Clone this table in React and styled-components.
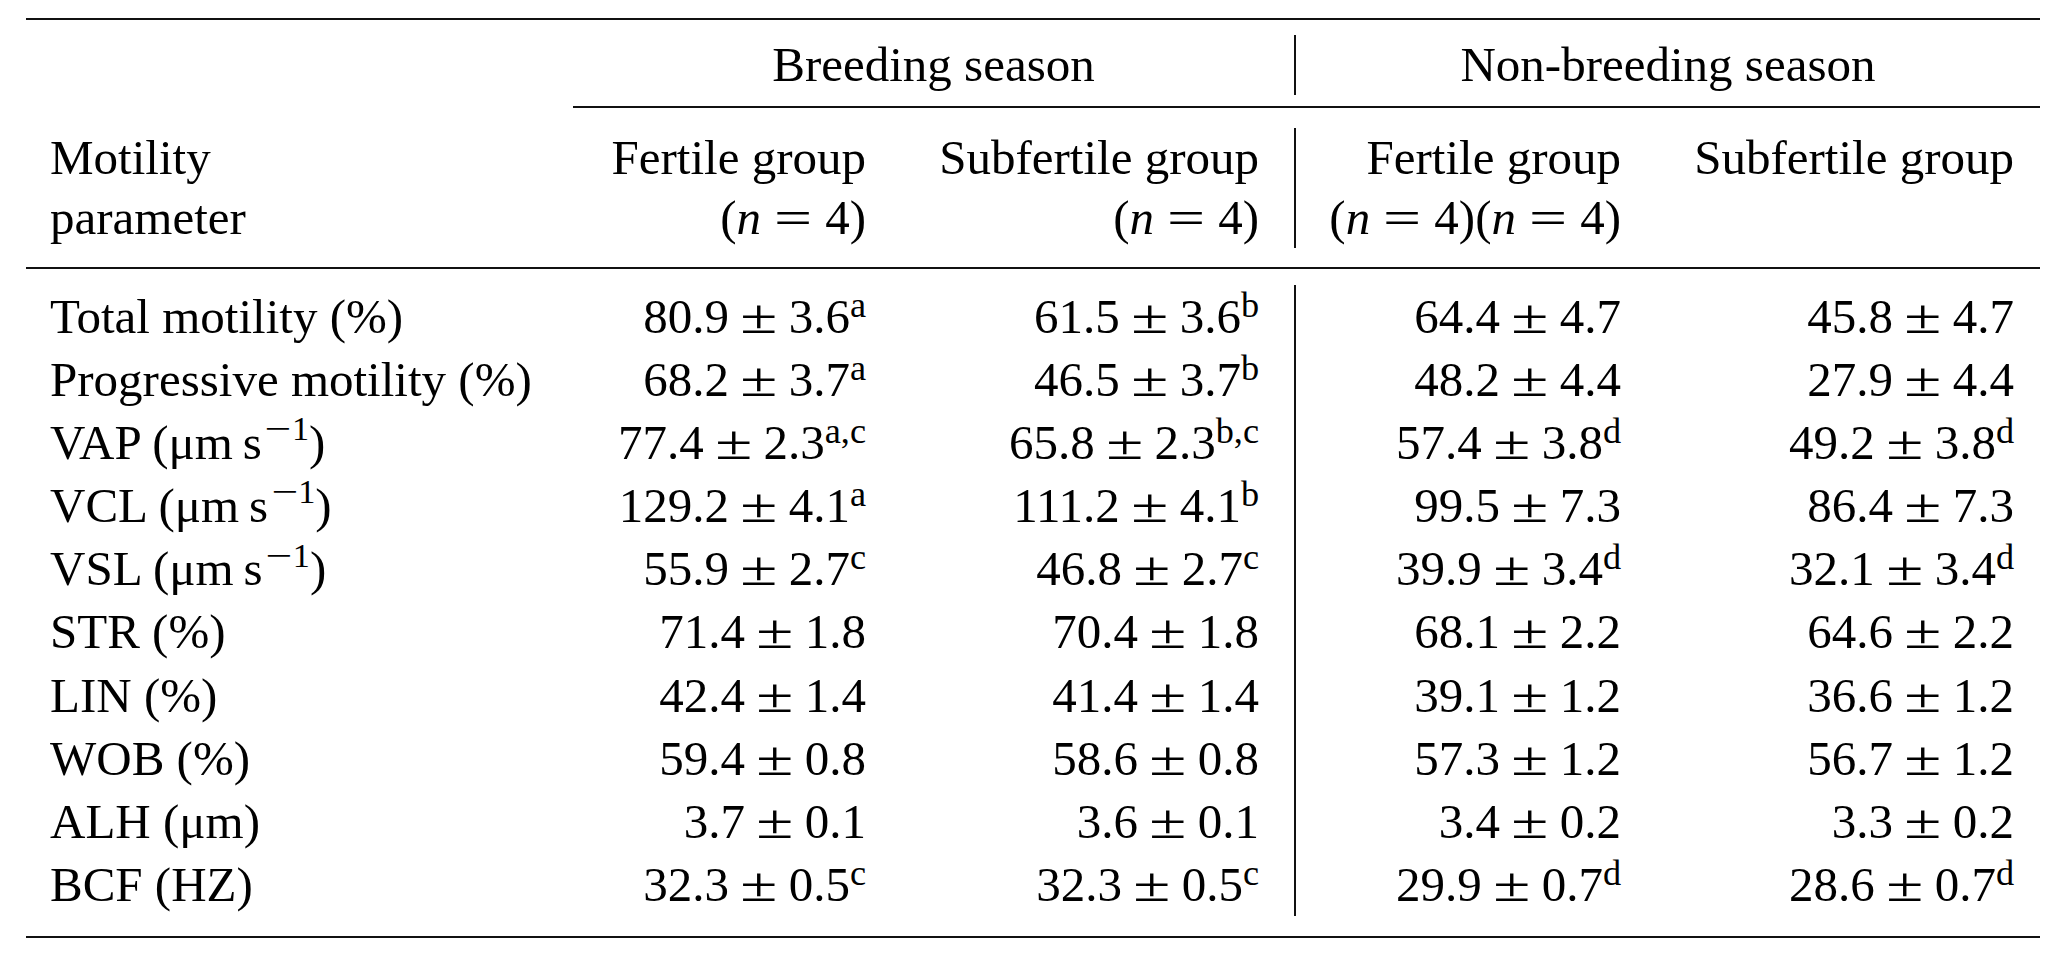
import styled, { createGlobalStyle } from 'styled-components'

const GlobalStyle = createGlobalStyle`
  html, body {
    margin: 0;
    padding: 0;
    background: #fff;
  }
  body {
    font-family: "Liberation Serif", "Times New Roman", serif;
    color: #000;
  }
`;

const COLS = '547px 327px 394px 362px 384px';

const rows = [
  { label: 'Total motility (%)', cells: [['80.9', '3.6', 'a'], ['61.5', '3.6', 'b'], ['64.4', '4.7'], ['45.8', '4.7']] },
  { label: 'Progressive motility (%)', cells: [['68.2', '3.7', 'a'], ['46.5', '3.7', 'b'], ['48.2', '4.4'], ['27.9', '4.4']] },
  { label: 'VAP', unit: true, cells: [['77.4', '2.3', 'a,c'], ['65.8', '2.3', 'b,c'], ['57.4', '3.8', 'd'], ['49.2', '3.8', 'd']] },
  { label: 'VCL', unit: true, cells: [['129.2', '4.1', 'a'], ['111.2', '4.1', 'b'], ['99.5', '7.3'], ['86.4', '7.3']] },
  { label: 'VSL', unit: true, cells: [['55.9', '2.7', 'c'], ['46.8', '2.7', 'c'], ['39.9', '3.4', 'd'], ['32.1', '3.4', 'd']] },
  { label: 'STR (%)', cells: [['71.4', '1.8'], ['70.4', '1.8'], ['68.1', '2.2'], ['64.6', '2.2']] },
  { label: 'LIN (%)', cells: [['42.4', '1.4'], ['41.4', '1.4'], ['39.1', '1.2'], ['36.6', '1.2']] },
  { label: 'WOB (%)', cells: [['59.4', '0.8'], ['58.6', '0.8'], ['57.3', '1.2'], ['56.7', '1.2']] },
  { label: 'ALH (\u03bcm)', cells: [['3.7', '0.1'], ['3.6', '0.1'], ['3.4', '0.2'], ['3.3', '0.2']] },
  { label: 'BCF (HZ)', cells: [['32.3', '0.5', 'c'], ['32.3', '0.5', 'c'], ['29.9', '0.7', 'd'], ['28.6', '0.7', 'd']] },
];

// right padding of each value column (breeding fertile, breeding subfertile, non-breeding fertile, non-breeding subfertile)
const PADS = [34, 35, 35, 26];

function Value({ mean, err, sup }) {
  return (
    <>
      {mean}
      <Op $w={1.22}>±</Op>
      {err}
      {sup && <Sup>{sup}</Sup>}
    </>
  );
}

function NEq() {
  return (
    <>
      (<I>n</I>
      <Op $w={1.31}>=</Op>4)
    </>
  );
}

function Unit() {
  return (
    <>
      {' (\u03bcm\u2009s'}
      <UnitSup>
        <Op $w={0.8}>−</Op>1
      </UnitSup>
      )
    </>
  );
}

export default function App() {
  return (
    <>
      <GlobalStyle />
      <Sheet>
        <Rule $thick={2} />

        <Row $h={60} $above={15}>
          <Cell />
          <Cell $span={2} $align="center">Breeding season</Cell>
          <Cell $span={2} $align="center" $divider>Non-breeding season</Cell>
        </Row>

        <Rule $thick={2} $above={11} $indent={547} />

        <Row $h={60} $above={20}>
          <Cell $padLeft={24}>
            Motility
            <br />
            parameter
          </Cell>
          <Cell $align="right" $padRight={PADS[0]}>
            Fertile group
            <br />
            <NEq />
          </Cell>
          <Cell $align="right" $padRight={PADS[1]}>
            Subfertile group
            <br />
            <NEq />
          </Cell>
          <Cell $align="right" $padRight={PADS[2]} $divider>
            Fertile group
            <br />
            <NEq />
            <NEq />
          </Cell>
          <Cell $align="right" $padRight={PADS[3]}>
            Subfertile group
          </Cell>
        </Row>

        <Rule $thick={2} $above={19} />

        <Body>
          {rows.map((r) => (
            <Row key={r.label} $h={63.1}>
              <Cell $padLeft={24}>
                {r.label}
                {r.unit && <Unit />}
              </Cell>
              {r.cells.map(([mean, err, sup], i) => (
                <Cell key={i} $align="right" $padRight={PADS[i]} $divider={i === 2}>
                  <Value mean={mean} err={err} sup={sup} />
                </Cell>
              ))}
            </Row>
          ))}
        </Body>

        <Rule $thick={2} $above={20} />
      </Sheet>
    </>
  );
}

const Sheet = styled.div`
  width: 2014px;
  padding: 18px 0 0 26px;
  font-size: 49px;
`;

const Rule = styled.div`
  height: ${(p) => p.$thick}px;
  background: #111;
  margin-top: ${(p) => p.$above || 0}px;
  margin-left: ${(p) => p.$indent || 0}px;
`;

const Body = styled.div`
  margin-top: 16px;
`;

const Row = styled.div`
  display: grid;
  grid-template-columns: ${COLS};
  line-height: ${(p) => p.$h}px;
  margin-top: ${(p) => p.$above || 0}px;
`;

const Cell = styled.div`
  grid-column: span ${(p) => p.$span || 1};
  text-align: ${(p) => p.$align || 'left'};
  padding: 0 ${(p) => p.$padRight || 0}px 0 ${(p) => p.$padLeft || 0}px;
  border-left: ${(p) => (p.$divider ? '2px solid #111' : 'none')};
  white-space: nowrap;
`;

// math operator: TeX-wide glyph with its spacing
const Op = styled.span`
  display: inline-block;
  width: ${(p) => p.$w}em;
  text-align: center;
  transform: scaleX(1.38);
`;

const I = styled.i`
  font-style: italic;
`;

const Sup = styled.sup`
  font-size: 0.74em;
  line-height: 0;
  vertical-align: 0.44em;
`;

const UnitSup = styled.sup`
  font-size: 0.7em;
  line-height: 0;
  vertical-align: 0.55em;
  margin-left: 0.08em;
`;
